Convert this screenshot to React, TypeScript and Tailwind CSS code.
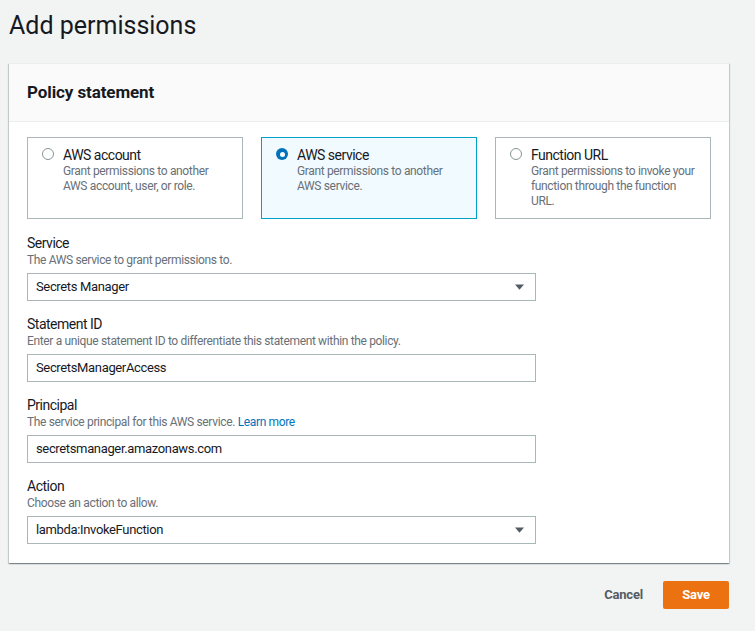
import React from "react";

const font = { fontFamily: "Roboto, 'Noto Sans', sans-serif" };

function Radio({ checked }: { checked: boolean }) {
  return checked ? (
    <span className="mt-[2px] flex h-[12px] w-[12px] shrink-0 items-center justify-center rounded-full bg-[#0073bb]">
      <span className="h-[5px] w-[5px] rounded-full bg-white" />
    </span>
  ) : (
    <span className="mt-[2px] h-[12px] w-[12px] shrink-0 rounded-full border-[1.5px] border-[#879596] bg-white" />
  );
}

function Tile({
  title,
  desc,
  checked,
}: {
  title: string;
  desc: string;
  checked: boolean;
}) {
  return (
    <div
      className={
        checked
          ? "flex h-[82px] gap-[9px] border border-[#00a1c9] bg-[#f1faff] pl-[14px] pr-[14px] pt-[8px]"
          : "flex h-[82px] gap-[9px] border border-[#aab7b8] bg-white pl-[14px] pr-[14px] pt-[8px]"
      }
    >
      <Radio checked={checked} />
      <div className="flex flex-col">
        <div className="text-[14px] leading-[18px] tracking-[-0.5px] text-[#16191f]">{title}</div>
        <div className="text-[12px] leading-[15px] tracking-[-0.35px] text-[#687078]">{desc}</div>
      </div>
    </div>
  );
}

function Caret() {
  return (
    <svg width="9" height="6" viewBox="0 0 9 6" className="shrink-0">
      <path d="M0 0.5 L9 0.5 L4.5 5.8 Z" fill="#545b64" />
    </svg>
  );
}

function Field({
  label,
  desc,
  value,
  select,
  link,
}: {
  label: string;
  desc: string;
  value: string;
  select?: boolean;
  link?: string;
}) {
  return (
    <div className="flex flex-col">
      <div className="text-[14px] leading-[18px] tracking-[-0.5px] text-[#16191f]">{label}</div>
      <div className="text-[12px] leading-[16px] tracking-[-0.35px] text-[#687078]">
        {desc}
        {link ? <span className="text-[#0073bb]"> {link}</span> : null}
      </div>
      <div className="mt-[5px] flex h-[28px] w-[509px] items-center justify-between border border-[#aab7b8] bg-white pl-[8px] pr-[11px]">
        <span className="text-[13px] tracking-[-0.35px] text-[#16191f]">{value}</span>
        {select ? <Caret /> : null}
      </div>
    </div>
  );
}

export default function App() {
  return (
    <div className="min-h-[631px] w-full bg-[#f2f3f3] pb-[21px]" style={font}>
      <h1 className="pl-[9px] pt-[10px] text-[25px] font-normal leading-[32px] text-[#16191f]">
        Add permissions
      </h1>
      <div className="ml-[9px] mt-[21px] w-[720px] border-t border-[#eaeded] bg-white shadow-[0_1px_1px_0_rgba(0,28,36,0.3),1px_1px_1px_0_rgba(0,28,36,0.15),-1px_1px_1px_0_rgba(0,28,36,0.15)]">
        <div className="flex h-[58px] items-center border-b border-[#eaeded] bg-[#fafafa] pb-[2px] pl-[18px]">
          <h2 className="text-[17px] font-bold leading-[22px] tracking-[-0.1px] text-[#16191f]">
            Policy statement
          </h2>
        </div>
        <div className="px-[18px] pb-[19px] pt-[15px]">
          <div className="grid grid-cols-3 gap-[18px]">
            <Tile
              title="AWS account"
              desc="Grant permissions to another AWS account, user, or role."
              checked={false}
            />
            <Tile
              title="AWS service"
              desc="Grant permissions to another AWS service."
              checked={true}
            />
            <Tile
              title="Function URL"
              desc="Grant permissions to invoke your function through the function URL."
              checked={false}
            />
          </div>
          <div className="mt-[15px] flex flex-col gap-[14px]">
            <Field
              label="Service"
              desc="The AWS service to grant permissions to."
              value="Secrets Manager"
              select
            />
            <Field
              label="Statement ID"
              desc="Enter a unique statement ID to differentiate this statement within the policy."
              value="SecretsManagerAccess"
            />
            <Field
              label="Principal"
              desc="The service principal for this AWS service."
              link="Learn more"
              value="secretsmanager.amazonaws.com"
            />
            <Field
              label="Action"
              desc="Choose an action to allow."
              value="lambda:InvokeFunction"
              select
            />
          </div>
        </div>
      </div>
      <div className="mt-[18px] flex w-[729px] items-center justify-end gap-[20px]">
        <button className="text-[13px] font-bold tracking-[-0.2px] text-[#545b64]">Cancel</button>
        <button className="flex h-[28px] w-[66px] items-center justify-center rounded-[2px] bg-[#ec7211] text-[13px] font-bold tracking-[-0.2px] text-white">
          Save
        </button>
      </div>
    </div>
  );
}
